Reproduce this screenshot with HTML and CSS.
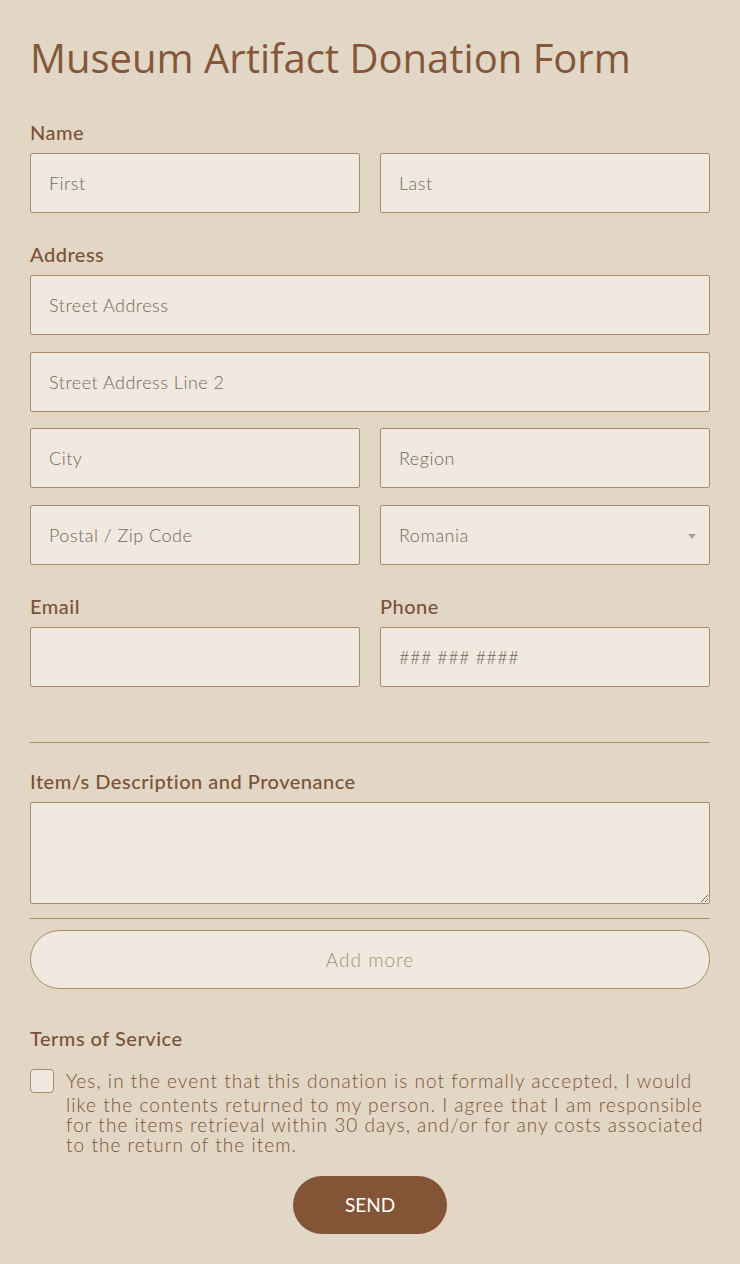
FILE: index.html
```html
<!DOCTYPE html>
<html lang="en">
<head>
<meta charset="UTF-8">
<meta name="viewport" content="width=device-width, initial-scale=1.0">
<title>Museum Artifact Donation Form</title>
<link rel="stylesheet" href="styles.css">
</head>
<body>
<form class="form">
  <h1 class="title">Museum Artifact Donation Form</h1>

  <div class="field">
    <label class="label">Name</label>
    <div class="row">
      <input class="input" type="text" placeholder="First">
      <input class="input" type="text" placeholder="Last">
    </div>
  </div>

  <div class="field">
    <label class="label">Address</label>
    <div class="stack">
      <input class="input" type="text" placeholder="Street Address">
      <input class="input" type="text" placeholder="Street Address Line 2">
      <div class="row">
        <input class="input" type="text" placeholder="City">
        <input class="input" type="text" placeholder="Region">
      </div>
      <div class="row">
        <input class="input" type="text" placeholder="Postal / Zip Code">
        <div class="select-wrap">
          <select class="input select">
            <option>Romania</option>
          </select>
        </div>
      </div>
    </div>
  </div>

  <div class="row field-contact">
    <div class="col">
      <label class="label">Email</label>
      <input class="input" type="email">
    </div>
    <div class="col">
      <label class="label">Phone</label>
      <input class="input phone" type="tel" placeholder="### ### ####">
    </div>
  </div>

  <hr class="divider">

  <div class="field field-items">
    <label class="label">Item/s Description and Provenance</label>
    <textarea class="input textarea"></textarea>
  </div>
  <hr class="divider divider-tight">
  <button type="button" class="add-more">Add more</button>

  <div class="field field-terms">
    <label class="label">Terms of Service</label>
    <div class="check-row">
      <input type="checkbox" class="checkbox" id="terms">
      <label for="terms" class="check-text"><span class="first-line">Yes, in the event that this donation is not formally accepted, I would</span> like the contents returned to my person. I agree that I am responsible for the items retrieval within 30 days, and/or for any costs associated to the return of the item.</label>
    </div>
  </div>

  <div class="actions">
    <button type="submit" class="send">SEND</button>
  </div>
</form>
</body>
</html>
```

FILE: styles.css
```css
body {
  margin: 0;
  background-color: #e2d7c5;
  font-family: Lato, "Noto Sans", sans-serif;
  color: #7b5236;
}
.form {
  padding: 30px 30px 30px;
}
.title {
  margin: 0 0 35px;
  font-family: "Open Sans", sans-serif;
  font-weight: 400;
  font-size: 40px;
  line-height: 56px;
  color: #85573a;
}
.field {
  margin-bottom: 30px;
}
.label {
  display: block;
  font-size: 20px;
  line-height: 23px;
  font-weight: 500;
  letter-spacing: 0.5px;
  margin-bottom: 9px;
  color: #7b5236;
}
.row {
  display: grid;
  grid-template-columns: 1fr 1fr;
  gap: 20px;
}
.stack {
  display: flex;
  flex-direction: column;
  gap: 16.5px;
}
.input {
  box-sizing: border-box;
  width: 100%;
  height: 60px;
  padding: 0 18px;
  background-color: #f0e9df;
  border: 1px solid #a88c66;
  border-radius: 2px;
  font-family: Lato, "Noto Sans", sans-serif;
  font-size: 18px;
  letter-spacing: 0.5px;
  color: #7b5236;
  outline: none;
}
.input::placeholder {
  color: #76665a;
  font-weight: 300;
}
.select-wrap {
  position: relative;
}
.select {
  appearance: none;
  -webkit-appearance: none;
  font-weight: 300;
  color: #76665a;
}
.select-wrap::after {
  content: "";
  position: absolute;
  right: 14px;
  top: 29px;
  border-left: 4px solid transparent;
  border-right: 4px solid transparent;
  border-top: 5px solid #a9a296;
}
.field-contact {
  margin-top: 1px;
  margin-bottom: 55px;
}
.col {
  display: flex;
  flex-direction: column;
}
.divider {
  margin: 0 0 27px;
  border: 0;
  border-top: 1px solid #a88c66;
}
.textarea {
  display: block;
  height: 102px;
  padding: 12px 18px;
  resize: vertical;
}
.field-items {
  margin-bottom: 14px;
}
.divider-tight {
  margin-bottom: 11px;
}
.add-more {
  display: block;
  width: 100%;
  height: 59px;
  background-color: #f0e9df;
  border: 1px solid #a88c66;
  border-radius: 30px;
  font-family: Lato, "Noto Sans", sans-serif;
  font-size: 19px;
  font-weight: 300;
  letter-spacing: 1px;
  color: #a88f70;
  margin-bottom: 38px;
  cursor: pointer;
}
.field-terms {
  margin-bottom: 21px;
}
.field-terms .label {
  margin-bottom: 17px;
}
.check-row {
  display: flex;
  gap: 12px;
  align-items: flex-start;
}
.checkbox {
  appearance: none;
  -webkit-appearance: none;
  flex: none;
  width: 24px;
  height: 24px;
  margin: 2px 0 0;
  background-color: #f0e9df;
  border: 1px solid #a88c66;
  border-radius: 4px;
}
.check-text {
  font-size: 19px;
  line-height: 20px;
  font-weight: 300;
  letter-spacing: 1.05px;
  color: #7b5236;
}
.first-line {
  display: block;
  line-height: 28px;
}
.actions {
  display: flex;
  justify-content: center;
}
.send {
  width: 154px;
  height: 58px;
  background-color: #845436;
  border: 0;
  border-radius: 29px;
  font-family: Lato, "Noto Sans", sans-serif;
  font-size: 19px;
  color: #fff;
  cursor: pointer;
}
```
